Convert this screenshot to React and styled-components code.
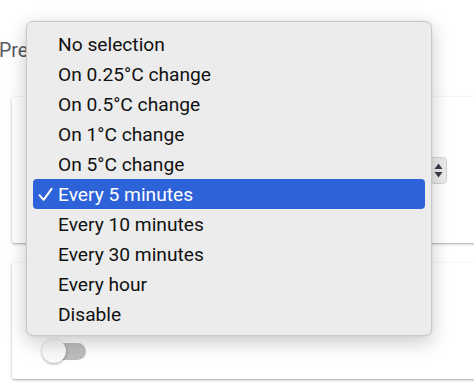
import React from "react";
import styled, { createGlobalStyle } from "styled-components";

const Global = createGlobalStyle`
  html, body { margin: 0; padding: 0; background: #ffffff; overflow: hidden; }
  body { font-family: Roboto, "Liberation Sans", Arial, sans-serif; }
`;

const Page = styled.div`
  position: relative;
  width: 474px;
  height: 382px;
  overflow: hidden;
  background: #ffffff;
`;

const Header = styled.div`
  height: 94px;
  margin-top: 3px;
  display: flex;
  align-items: center;
  font-size: 19.5px;
  color: #555a5f;
  margin-left: -1px;
  box-sizing: border-box;
`;

const Cards = styled.div`
  display: flex;
  flex-direction: column;
  gap: 20px;
  padding-left: 12px;
`;

const Card = styled.div`
  width: 500px;
  height: ${(p) => p.h}px;
  background: #ffffff;
  box-shadow: 0 1px 3px rgba(0, 0, 0, 0.28), 0 1px 1px rgba(0, 0, 0, 0.08);
  border-radius: 2px;
  box-sizing: border-box;
  display: flex;
  align-items: ${(p) => p.align || "center"};
`;

const SelectBox = styled.div`
  margin-left: 380px;
  width: 55px;
  height: 27px;
  display: flex;
  justify-content: flex-end;
`;

const Stepper = styled.div`
  width: 17px;
  height: 27px;
  background: #ececec;
  border: 1px solid #d4d4d4;
  border-radius: 4px;
  box-sizing: border-box;
  display: flex;
  align-items: center;
  justify-content: center;
`;

const Toggle = styled.div`
  position: relative;
  width: 44px;
  height: 24px;
  margin-left: 30px;
  margin-bottom: 16px;
`;

const Track = styled.div`
  position: absolute;
  left: 4px;
  right: 0;
  top: 4px;
  height: 17px;
  border-radius: 9px;
  background: #bdbdbd;
`;

const Knob = styled.div`
  position: absolute;
  left: 0;
  top: 0;
  width: 24px;
  height: 24px;
  border-radius: 50%;
  background: #fafafa;
  box-shadow: 0 1px 3px rgba(0, 0, 0, 0.35);
`;

const Menu = styled.ul`
  position: absolute;
  left: 26px;
  top: 21px;
  width: 406px;
  height: 315px;
  margin: 0;
  padding: 7px 6px;
  box-sizing: border-box;
  list-style: none;
  background: #ececec;
  border: 1px solid #c9c9c9;
  border-radius: 7px;
  box-shadow: 0 6px 20px rgba(0, 0, 0, 0.22), 0 0 2px rgba(0, 0, 0, 0.1);
`;

const Item = styled.li`
  height: 30px;
  display: flex;
  align-items: center;
  border-radius: 4px;
  font-size: 19.2px;
  color: ${(p) => (p.selected ? "#ffffff" : "#111111")};
  background: ${(p) => (p.selected ? "#2e62d9" : "transparent")};
`;

const Check = styled.span`
  width: 25px;
  padding-left: 5px;
  box-sizing: border-box;
  display: flex;
  align-items: center;
`;

const items = [
  "No selection",
  "On 0.25°C change",
  "On 0.5°C change",
  "On 1°C change",
  "On 5°C change",
  "Every 5 minutes",
  "Every 10 minutes",
  "Every 30 minutes",
  "Every hour",
  "Disable",
];

export default function App() {
  return (
    <Page>
      <Global />
      <Header>Preferences</Header>
      <Cards>
        <Card h={146}>
          <SelectBox>
            <Stepper>
              <svg width="9" height="17" viewBox="0 0 9 17">
                <path d="M4.5 1.5 L8.5 7 L0.5 7 Z" fill="#3a3a4a" />
                <path d="M0.5 10 L8.5 10 L4.5 15.5 Z" fill="#3a3a4a" />
              </svg>
            </Stepper>
          </SelectBox>
        </Card>
        <Card h={116} align="flex-end">
          <Toggle>
            <Track />
            <Knob />
          </Toggle>
        </Card>
      </Cards>
      <Menu>
        {items.map((t) => {
          const sel = t === "Every 5 minutes";
          return (
            <Item key={t} selected={sel}>
              <Check>
                {sel && (
                  <svg width="15" height="15" viewBox="0 0 15 15">
                    <path
                      d="M1.5 8.2 L5.6 12.8 L13.6 1.8"
                      fill="none"
                      stroke="#ffffff"
                      strokeWidth="2"
                      strokeLinecap="round"
                      strokeLinejoin="round"
                    />
                  </svg>
                )}
              </Check>
              {t}
            </Item>
          );
        })}
      </Menu>
    </Page>
  );
}
